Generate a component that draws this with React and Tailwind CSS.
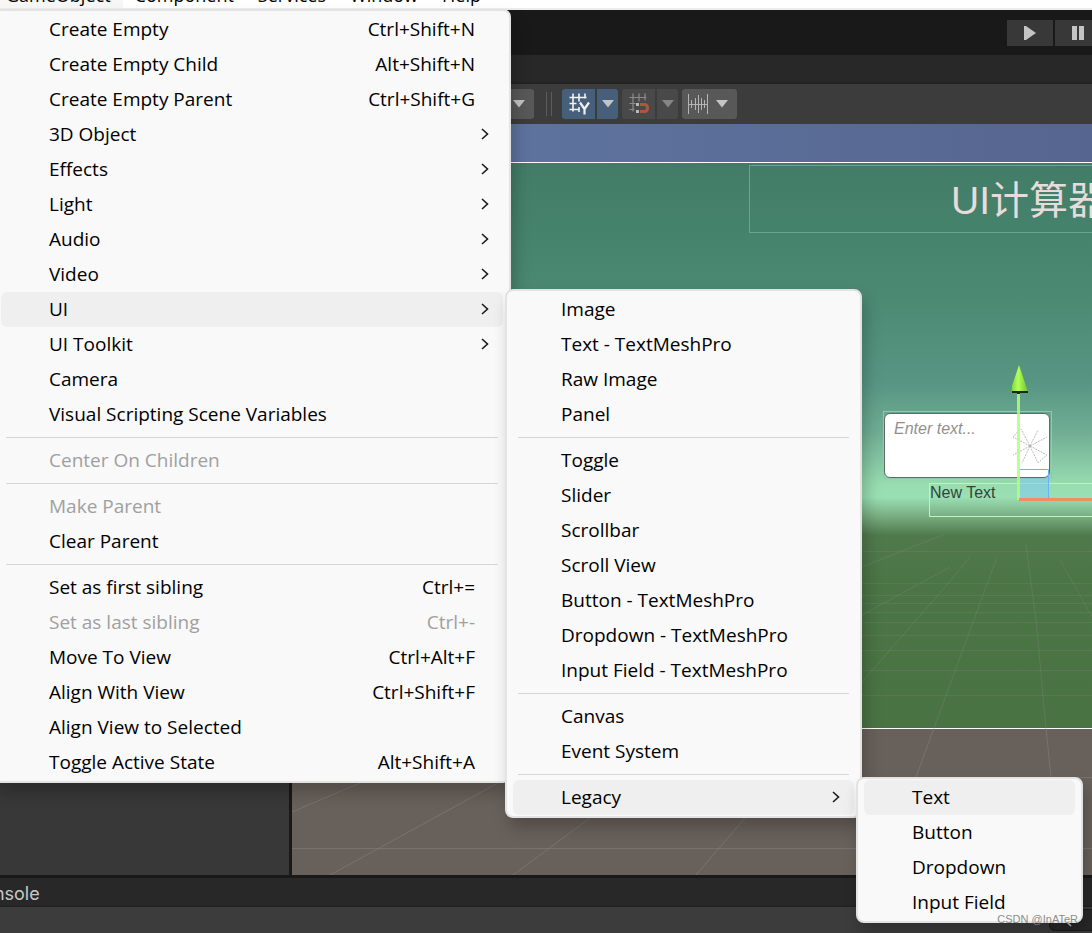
import React from 'react';

const menuBar = ['GameObject', 'Component', 'Services', 'Window', 'Help'];

const legacyMenu = [
  { label: 'Text', active: true },
  { label: 'Button' },
  { label: 'Dropdown' },
  { label: 'Input Field' },
];

const uiMenu = [
  { label: 'Image' },
  { label: 'Text - TextMeshPro' },
  { label: 'Raw Image' },
  { label: 'Panel' },
  null,
  { label: 'Toggle' },
  { label: 'Slider' },
  { label: 'Scrollbar' },
  { label: 'Scroll View' },
  { label: 'Button - TextMeshPro' },
  { label: 'Dropdown - TextMeshPro' },
  { label: 'Input Field - TextMeshPro' },
  null,
  { label: 'Canvas' },
  { label: 'Event System' },
  null,
  { label: 'Legacy', more: true, active: true, children: legacyMenu, width: 'w-[227px]' },
];

// null = separator
const gameObjectMenu = [
  { label: 'Create Empty', keys: 'Ctrl+Shift+N' },
  { label: 'Create Empty Child', keys: 'Alt+Shift+N' },
  { label: 'Create Empty Parent', keys: 'Ctrl+Shift+G' },
  { label: '3D Object', more: true },
  { label: 'Effects', more: true },
  { label: 'Light', more: true },
  { label: 'Audio', more: true },
  { label: 'Video', more: true },
  { label: 'UI', more: true, active: true, children: uiMenu, width: 'w-[357px]' },
  { label: 'UI Toolkit', more: true },
  { label: 'Camera' },
  { label: 'Visual Scripting Scene Variables' },
  null,
  { label: 'Center On Children', disabled: true },
  null,
  { label: 'Make Parent', disabled: true },
  { label: 'Clear Parent' },
  null,
  { label: 'Set as first sibling', keys: 'Ctrl+=' },
  { label: 'Set as last sibling', keys: 'Ctrl+-', disabled: true },
  { label: 'Move To View', keys: 'Ctrl+Alt+F' },
  { label: 'Align With View', keys: 'Ctrl+Shift+F' },
  { label: 'Align View to Selected' },
  { label: 'Toggle Active State', keys: 'Alt+Shift+A' },
];

function Chevron() {
  return (
    <svg className="w-2 h-3" viewBox="0 0 8 12" fill="none" stroke="#1a1a1a" strokeWidth="1.6">
      <path d="M1 1l5.5 5L1 11" />
    </svg>
  );
}

function Menu({ items, className }) {
  return (
    <ul className={`absolute z-10 bg-[#f9f9f9] border-2 border-[#e3e3e3] rounded-lg px-[6px] py-px shadow-[4px_10px_16px_rgba(0,0,0,0.22)] ${className}`}>
      {items.map((item, i) =>
        item === null ? (
          <li key={i} className="mx-[5px] my-[5px] h-px bg-[#d6d6d6]" />
        ) : (
          <li key={i} className="relative">
            <button
              disabled={item.disabled}
              className={`w-full h-[35px] pl-12 pr-[14px] pb-[2px] flex items-center rounded-md text-left text-[19px] whitespace-nowrap ${
                item.active ? 'bg-[#efefef]' : ''
              } ${item.disabled ? 'text-[#a0a0a0]' : 'text-black'}`}
            >
              <span className="flex-1">{item.label}</span>
              {item.keys && <span className="mr-[14px]">{item.keys}</span>}
              {item.more && <Chevron />}
            </button>
            {item.children && (
              <Menu items={item.children} className={`left-full ml-[2px] -top-[3px] ${item.width}`} />
            )}
          </li>
        )
      )}
    </ul>
  );
}

function Caret({ color = '#c4c4c4' }) {
  return (
    <svg className="w-3 h-2" viewBox="0 0 12 8" fill={color}>
      <path d="M0 0h12L6 7.500z" />
    </svg>
  );
}

function GridYIcon() {
  return (
    <svg className="w-6 h-6" viewBox="0 0 24 24" fill="none" stroke="#f2f2f2" strokeWidth="1.600">
      <path d="M2.500 5.500h17M2.500 11.500h7M2.500 17.500h10M6 1.500v18M12 1.500v8M18 1.500v5M12 15v5" />
      <path d="M13 10.500l4.500 6.500 4.500-6.500M17.500 16v6.500" strokeWidth="2.200" />
    </svg>
  );
}

function GridSnapIcon() {
  return (
    <svg className="w-6 h-6" viewBox="0 0 24 24" fill="none">
      <path d="M2.500 5.500h17M2.500 11.500h6M2.500 17.500h5M6 1.500v18M12 1.500v8M18 1.500v7" stroke="#8c8c8c" strokeWidth="1.200" />
      <path d="M13 12.500h4.500q3 0 3 3.500t-3 3.500H13" stroke="#a9583e" strokeWidth="3" />
      <path d="M9 11h3v3H9zM9 18h3v3H9z" fill="#b8b8b8" />
    </svg>
  );
}

function RulerIcon() {
  return (
    <svg className="w-5 h-5" viewBox="0 0 20 20" fill="none" stroke="#b4b4b4" strokeWidth="1">
      <path d="M.5 0v20M19.500 0v20M10.500 1v18M3.500 6v8M7.500 4v12M13.500 4v12M16.500 6v8M0 10.500h20" />
    </svg>
  );
}

function Toolbar() {
  return (
    <div className="h-10 pl-[182px] bg-[#3c3c3c] flex items-center">
      <button className="w-[60px] h-[30px] pr-[9px] bg-[#585858] rounded-[3px] flex items-center justify-end">
        <Caret />
      </button>
      <div className="ml-[12px] mr-[10px] w-[6px] h-6 border-x border-[#5c5c5c]" />
      <div className="flex gap-[2px] mr-1">
        <button className="w-[33px] h-[30px] bg-[#46607c] rounded-l-[3px] flex items-center justify-center">
          <GridYIcon />
        </button>
        <button className="w-[21px] h-[30px] bg-[#46607c] rounded-r-[3px] flex items-center justify-center">
          <Caret />
        </button>
      </div>
      <div className="flex gap-[2px] mr-1">
        <button className="w-[33px] h-[30px] bg-[#494949] rounded-l-[3px] flex items-center justify-center">
          <GridSnapIcon />
        </button>
        <button className="w-[21px] h-[30px] bg-[#494949] rounded-r-[3px] flex items-center justify-center">
          <Caret color="#858585" />
        </button>
      </div>
      <button className="w-[55px] h-[30px] pl-[6px] pr-[9px] bg-[#585858] rounded-[3px] flex items-center justify-between">
        <RulerIcon />
        <Caret />
      </button>
    </div>
  );
}

// perspective floor lines
function FloorGrid() {
  return (
    <svg className="absolute left-0 top-0 w-[800px] h-[751px]" viewBox="292 124 800 751" fill="none" stroke="#8f8f90">
      <path
        strokeOpacity="0.22"
        d="M292 551.500h800M292 583.500h800M292 595.500h800M292 603.500h800M292 612.500h800M292 622.500h800M292 635.500h800M292 650.500h800M292 670.500h800M292 695.500h800"
      />
      <path strokeOpacity="0.4" d="M292 777.500h800M292 848.500h800" />
      <path
        strokeOpacity="0.25"
        d="M862 567l83-33M862 615l88-48M862 682l83-95 25-30M934 728l63-171M1046 728l-10-108-10-75M1092 617l-32-57"
      />
      <path
        strokeOpacity="0.4"
        d="M292 812l68-29M330 875l168-92M513 875l77-57M696 875l49-57M916 777l18-49M1051 777l-5-49M1051 777l9 98"
      />
    </svg>
  );
}

// move handle of the selected object
function MoveGizmo() {
  return (
    <svg className="absolute left-[720px] top-[236px] w-[80px] h-[150px]" viewBox="1012 360 80 150" fill="none">
      <defs>
        <linearGradient id="cone" x1="0" x2="1" y1="0" y2="0">
          <stop offset="0" stopColor="#6fd22a" />
          <stop offset="0.450" stopColor="#b4ff5c" />
          <stop offset="1" stopColor="#6ac526" />
        </linearGradient>
      </defs>
      <path
        d="M1030 446l-9-17M1030 446l8-16M1030 446l17-9M1030 446l-17-9 7-8M1030 446l-17 9M1030 446l-8 17M1030 446l8 17 9-8M1030 446l17 9"
        stroke="#a8a8a8"
        strokeWidth="0.800"
        strokeDasharray="2 1"
      />
      <path d="M1019 478h30v22h-30z" fill="#7fc8f5" fillOpacity="0.550" />
      <path d="M1019 469.500h29.500v30" stroke="#6ab4f5" />
      <path d="M1018.500 392v108" stroke="#b0ff7a" strokeWidth="3" strokeOpacity="0.850" />
      <path d="M1019 499.500h73" stroke="#ec8f66" strokeWidth="3" />
      <path d="M1019 365l9 27h-18z" fill="url(#cone)" />
      <path d="M1010 391h18v2h-8v1h-3v-1h-7z" fill="#1c2a14" />
    </svg>
  );
}

function SceneView() {
  return (
    <div className="relative flex-1 overflow-hidden bg-[#68605b]">
      <div className="h-[38px] bg-linear-to-r from-[#6079a4] to-[#56658f]" />
      <div className="h-[567px] border-y border-white bg-[linear-gradient(#427c66_0px,#45826c_60px,#4b8973_130px,#589683_220px,#71ae95_270px,#98dcb0_322px,#9ae0b3_334px,#7fb68b_350px,#507a4d_372px,#4b7545_420px,#4a7343_565px)]" />
      <FloorGrid />

      {/* canvas contents */}
      <div className="absolute left-[457px] right-0 top-[41px] h-[68px] border border-r-0 border-[#6aa58e] overflow-hidden">
        <h1 className="pl-[201px] pt-px text-[39px] leading-[68px] whitespace-nowrap text-[#e6dcdb] font-['Liberation_Sans','Noto_Sans_CJK_SC',sans-serif]">
          UI计算器
        </h1>
      </div>
      <div className="absolute left-[591px] top-[287px] w-[169px] pr-px pt-px border border-[#8ccbb0]">
        <textarea
          aria-label="Enter text"
          placeholder="Enter text..."
          className="block w-full h-[65px] px-[9px] py-[5px] resize-none bg-white border border-[#5d6b66] rounded-md text-[16px] leading-5 italic placeholder:text-[#8f8f8f] font-['Liberation_Sans',sans-serif]"
        />
      </div>
      <div className="absolute left-[637px] right-0 top-[359px] h-[34px] border border-r-0 border-[#b9f7bd] text-[16px] leading-[18px] text-[#32453a] font-['Liberation_Sans',sans-serif]">
        New Text
      </div>
      <MoveGizmo />
    </div>
  );
}

function App() {
  return (
    <div className="relative min-h-screen overflow-hidden flex flex-col bg-[#191919] text-[18px] leading-6 font-['Open_Sans','Noto_Sans_CJK_SC',sans-serif]">
      {/* menu bar, scrolled up under the window edge */}
      <nav className="h-[10px] overflow-hidden bg-white border-b-2 border-[#ededed] flex items-end text-black">
        {menuBar.map((name) => (
          <button key={name} className={`px-3 first:pl-[6px] pb-px ${name === 'GameObject' ? 'bg-[#f7f7f7]' : ''}`}>
            {name}
          </button>
        ))}
      </nav>

      {/* play controls */}
      <div className="h-[45px] flex items-center justify-end gap-[2px]">
        <button aria-label="Play" className="w-[46px] h-[26px] bg-[#383838] flex items-center justify-center">
          <svg className="w-3 h-[14px]" viewBox="0 0 12 14" fill="#c4c4c4">
            <path d="M0 0h2l10 7-10 7H0z" />
          </svg>
        </button>
        <button aria-label="Pause" className="-mr-[9px] w-[46px] h-[26px] bg-[#383838] flex items-center justify-center">
          <svg className="w-3 h-[14px]" viewBox="0 0 12 14" fill="#c4c4c4">
            <path d="M0 0h5v14H0zM7 0h5v14H7z" />
          </svg>
        </button>
      </div>

      <div className="flex-1 flex">
        <aside className="w-[292px] bg-[#383838] border-r-[3px] border-[#191919]" />
        <main className="flex-1 flex flex-col">
          <div className="h-[29px] bg-[#282828] border-b-2 border-[#232323]" />
          <Toolbar />
          <SceneView />
        </main>
      </div>

      {/* console */}
      <footer className="mt-[3px]">
        <div className="h-[29px] pt-1 bg-[#282828] border-b-2 border-[#232323] flex items-center">
          <button className="-ml-[30px] text-[18px] text-[#c8c8c8] font-['Inter',sans-serif]">Console</button>
        </div>
        <div className="h-[26px] bg-[#3c3c3c] flex items-center justify-end">
          <label className="w-[43px] h-[22px] pl-[7px] bg-[#282828] border border-r-0 border-[#1c1c1c] rounded-l-md flex items-center">
            <svg className="w-4 h-4 shrink-0" viewBox="0 0 16 16" fill="none" stroke="#c4c4c4" strokeWidth="1.500">
              <circle cx="6" cy="6" r="4" />
              <path d="M9 9l5 5" />
            </svg>
            <input type="search" aria-label="Search" className="w-full min-w-0 bg-transparent" />
          </label>
        </div>
      </footer>

      <Menu items={gameObjectMenu} className="-left-[7px] top-[9px] w-[518px]" />

      <p className="absolute z-20 right-[14px] bottom-[6px] text-[11px] leading-4 text-[#8c8c8c] font-['Liberation_Sans',sans-serif]">
        CSDN @InATeR
      </p>
    </div>
  );
}

export default App;
